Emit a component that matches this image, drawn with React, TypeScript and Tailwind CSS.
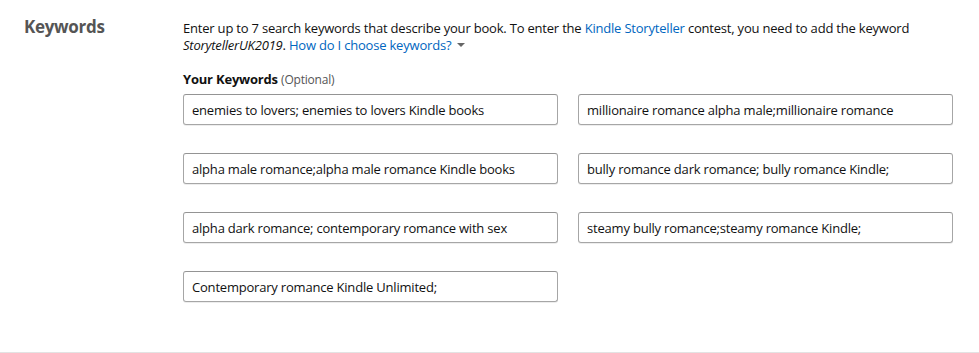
import * as React from 'react';

const keywords = [
  'enemies to lovers; enemies to lovers Kindle books',
  'millionaire romance alpha male;millionaire romance',
  'alpha male romance;alpha male romance Kindle books',
  'bully romance dark romance; bully romance Kindle;',
  'alpha dark romance; contemporary romance with sex',
  'steamy bully romance;steamy romance Kindle;',
  'Contemporary romance Kindle Unlimited;',
];

export default function App() {
  const [values, setValues] = React.useState<string[]>(keywords);

  return (
    <div className="w-[979px] h-[353px] bg-white font-['Open_Sans',sans-serif] text-[#111]">
      <div className="flex pt-[15px] pb-[50px] border-b-2 border-[#e3e3e3]">
        <div className="w-[183px] shrink-0 pl-6">
          <h2 className="text-[17px] font-bold text-[#555] leading-5 mt-[2px] tracking-[-0.3px]">Keywords</h2>
        </div>
        <div className="w-[770px] tracking-[-0.2px]">
          <p className="text-[13px] leading-[17px] pt-[5px]">
            Enter up to 7 search keywords that describe your book. To enter the{' '}
            <a className="text-[#0066c0]">Kindle Storyteller</a> contest, you need to add the keyword{' '}
            <i>StorytellerUK2019</i>.{' '}
            <a className="text-[#0066c0]">How do I choose keywords?</a>
            <span className="inline-block ml-[6px] mb-[3px] align-middle w-0 h-0 border-l-[4px] border-r-[4px] border-t-[4px] border-l-transparent border-r-transparent border-t-[#666]" />
          </p>
          <div className="mt-[17px] text-[13px] leading-[17px]">
            <span className="font-bold">Your Keywords</span>{' '}
            <span className="text-[#555] text-[12px]">(Optional)</span>
          </div>
          <div className="grid grid-cols-[375px_375px] gap-x-[20px] gap-y-[28px] mt-[6px]">
            {values.map((v, i) => (
              <input
                key={i}
                value={v}
                onChange={e => {
                  const next = [...values];
                  next[i] = e.target.value;
                  setValues(next);
                }}
                className="h-[31px] px-[8px] text-[13px] text-[#111] tracking-[-0.2px] border border-[#a6a6a6] border-t-[#949494] rounded-[3px] shadow-[inset_0_1px_0_rgba(255,255,255,0.5),0_1px_0_rgba(0,0,0,0.07)] outline-none"
              />
            ))}
          </div>
        </div>
      </div>
    </div>
  );
}
